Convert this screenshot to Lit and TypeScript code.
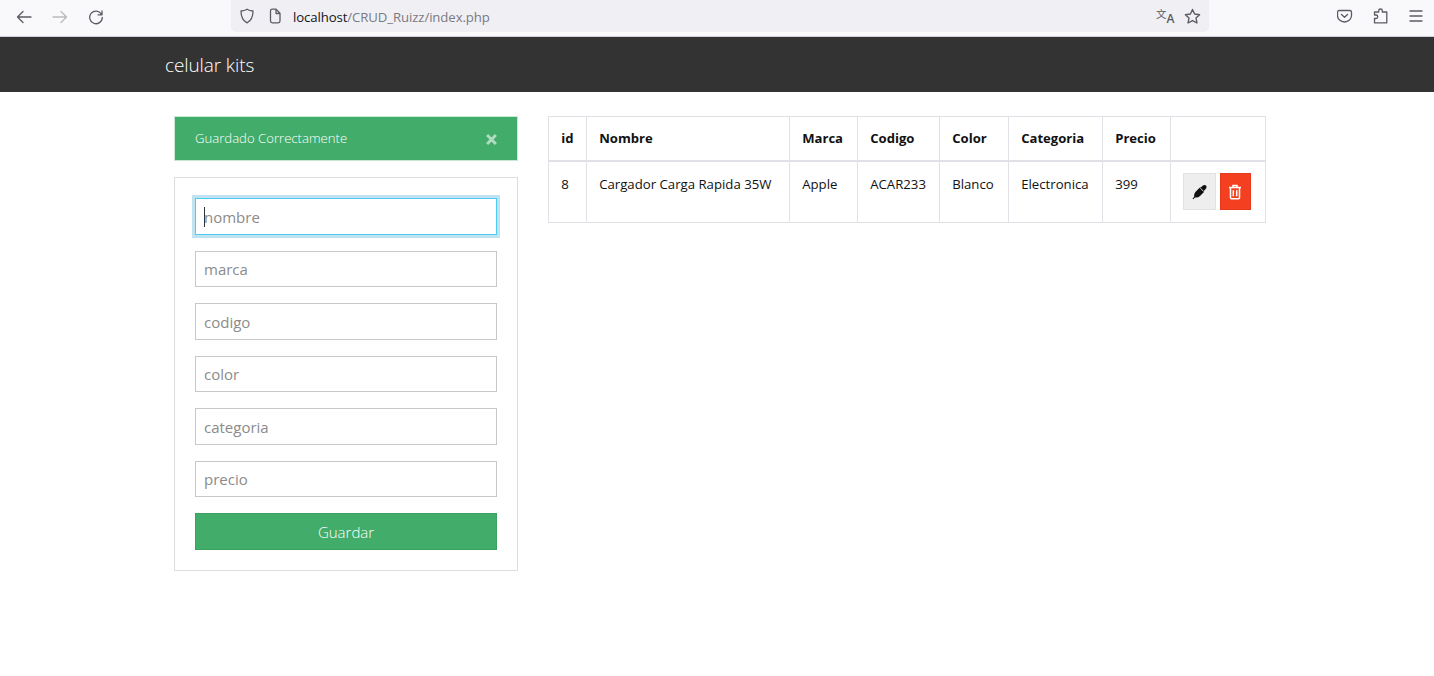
import { LitElement, html, svg, css } from "lit";
import { customElement } from "lit/decorators.js";

const ic = (body: unknown, cls = "") => html`<svg class="ic ${cls}" viewBox="0 0 16 16" fill="none" stroke="currentColor" stroke-width="1.300" stroke-linecap="round" stroke-linejoin="round">${body}</svg>`;

const FIELDS = ["marca", "codigo", "color", "categoria", "precio"];
const HEAD = [["id", "c1"], ["Nombre", "c2"], ["Marca", "c3"], ["Codigo", "c4"], ["Color", "c5"], ["Categoria", "c6"], ["Precio", "c7"], ["", "c8"]];
const ROW = ["8", "Cargador Carga Rapida 35W", "Apple", "ACAR233", "Blanco", "Electronica", "399"];

@customElement("app-root")
export class AppRoot extends LitElement {
  static styles = css`
    :host { display: block; width: 1434px; height: 676px; overflow: hidden; background: #fff; font-family: "Open Sans", sans-serif; color: #111; }
    * { box-sizing: border-box; }
    .toolbar { height: 37px; background: #f9f9fb; border-bottom: 1px solid #cfcfd8; display: flex; align-items: flex-start; }
    .ic { display: block; flex: none; width: 16px; height: 16px; }
    .nav { width: 231px; padding: 9px 0 0 16px; display: flex; gap: 20px; color: #5b5b66; }
    .nav .dim { color: #b9b9c0; }
    .url { width: 978px; height: 32px; background: #f0f0f4; border-radius: 0 0 5px 5px; display: flex; align-items: center; padding: 0 8px; color: #5b5b66; }
    .url .doc { margin-left: 12px; }
    .addr { margin-left: 10px; font-size: 13.200px; letter-spacing: -0.100px; color: #7a7a84; flex: 1; padding-top: 1px; }
    .addr b { font-weight: 400; color: #15141a; }
    .tr { display: block; flex: none; width: 20px; height: 22px; }
    .url .star { margin-left: 8px; width: 17px; height: 17px; }
    .right { flex: 1; display: flex; padding: 8px 0 0 128px; gap: 20px; color: #5b5b66; }
    .brandbar { height: 55px; background: #333; display: flex; align-items: center; padding: 0 0 0 165px; }
    .brand { color: #fff; font-size: 19px; font-weight: 300; letter-spacing: -0.100px; }
    .main { display: flex; gap: 30px; padding: 24px 168px 0 174px; }
    .left { width: 344px; flex: none; }
    .alert { height: 45px; background: #42ac6a; border: 1px solid #c9e8d4; display: flex; justify-content: space-between; align-items: center; padding: 0 20px; color: #fff; font-size: 13.150px; font-weight: 300; margin-bottom: 16px; }
    .alert span { padding-bottom: 2px; }
    .close { color: #fff; opacity: .6; margin: 2px 0 0 0; }
    .panel { border: 1px solid #ddd; padding: 20px; height: 394px; display: flex; flex-direction: column; gap: 16px; }
    .input { height: 36.500px; border: 1px solid #c8c8c8; background: #fff; padding: .5px 8px 0; display: flex; align-items: center; font-size: 15px; color: #8b8b8b; }
    .input.focus { border-color: #4fc9f5; box-shadow: 0 0 0 3px #bfe3f1; }
    .caret { width: 1px; height: 20px; background: #333; margin-right: -1px; }
    .btn { height: 36.500px; background: #42ac6a; border: 1px solid #3ba060; color: #fff; font-size: 15px; font-weight: 300; padding-top: 1px; display: flex; align-items: center; justify-content: center; }
    .right-col { width: 718px; flex: none; }
    table { width: 717px; border-collapse: collapse; table-layout: fixed; font-size: 13.200px; color: #111; }
    th, td { border: 1px solid #e0e0e6; padding: 0 8px 0 12.200px; text-align: left; }
    th { height: 44px; font-size: 13.100px; font-weight: 700; border-bottom-width: 2px; padding-bottom: 1px; }
    td { height: 62px; vertical-align: top; padding-top: 13px; }
    .c1 { width: 38px; } .c2 { width: 203px; } .c3 { width: 68px; } .c4 { width: 82px; }
    .c5 { width: 69px; } .c6 { width: 94px; } .c7 { width: 68px; } .c8 { width: 95px; }
    td.acts { padding: 11px 0 0 12px; }
    .acts div { display: flex; gap: 4px; }
    .b { height: 37px; display: flex; align-items: center; justify-content: center; padding-top: 2px; }
    .edit { width: 33px; background: #eee; border: 1px solid #e2e2e2; color: #111; }
    .del { width: 31px; background: #f44021; border: 1px solid #e63a1c; color: #fff; padding-right: 1px; }
  `;

  render() {
    return html`
      <div class="toolbar">
        <div class="nav">
          ${ic(svg`<path d="M15 8H1.500M7 2.500 1.500 8 7 13.500"/>`)}
          ${ic(svg`<path d="M1 8h13.500M9 2.500 14.500 8 9 13.500"/>`, "dim")}
          ${ic(svg`<path transform="translate(0 -1)" d="M14 2.800v4H10M13.600 6.500A6.300 6.300 0 1 0 14.300 9.500"/>`)}
        </div>
        <div class="url">
          ${ic(svg`<path d="M8 1.200c2 1.300 4 1.700 6 1.800 0 5.500-1.500 9.600-6 11.800C3.500 12.600 2 8.500 2 3c2-.1 4-.5 6-1.800z"/>`)}
          ${ic(svg`<path d="M3.500 3a1.800 1.800 0 0 1 1.800-1.800H9L13 5.200v7.800a1.800 1.800 0 0 1-1.800 1.800H5.300A1.800 1.800 0 0 1 3.500 13zM9 1.500V5.500H12.800"/>`, "doc")}
          <div class="addr"><b>localhost</b>/CRUD_Ruizz/index.php</div>
          <svg class="tr" viewBox="0 0 20 22" fill="currentColor"><text x="0" y="13" font-size="10.500" font-family="'Noto Sans CJK SC', sans-serif">文</text><text x="10.500" y="18" font-size="12" font-weight="600">A</text></svg>
          ${ic(svg`<path d="M8 1.400l2 4.300 4.700.6-3.400 3.200.9 4.600L8 11.800l-4.200 2.300.9-4.600L1.300 6.300 6 5.700z"/>`, "star")}
        </div>
        <div class="right">
          ${ic(svg`<path transform="translate(-.5 0)" d="M2.700 2.500h10.600A1.700 1.700 0 0 1 15 4.200V7.500a7 6.500 0 0 1-14 0V4.200a1.700 1.700 0 0 1 1.700-1.700zM5 6.500 8 9.300l3-2.800"/>`)}
          ${ic(svg`<path d="M1.500 14.800V10.500h1.500a1.500 1.500 0 0 0 0-3.500H1.500V4h4.200V2.800a1.800 1.800 0 0 1 3.600 0V4h4.500v10.800H1.500"/>`)}
          ${ic(svg`<path d="M1 3h12M1 8h12M1 13h12"/>`)}
        </div>
      </div>
      <div class="brandbar"><div class="brand">celular kits</div></div>
      <div class="main">
        <div class="left">
          <div class="alert"><span>Guardado Correctamente</span>
            <svg class="close" width="11" height="11" viewBox="0 0 10 10" stroke="currentColor" stroke-width="2.600"><path d="M1 1l8 8M9 1 1 9"/></svg>
          </div>
          <div class="panel">
            <div class="input focus"><span class="caret"></span>nombre</div>
            ${FIELDS.map((f) => html`<div class="input">${f}</div>`)}
            <div class="btn">Guardar</div>
          </div>
        </div>
        <div class="right-col">
          <table>
            <thead><tr>${HEAD.map(([t, c]) => html`<th class=${c}>${t}</th>`)}</tr></thead>
            <tbody><tr>
              ${ROW.map((t) => html`<td>${t}</td>`)}
              <td class="acts"><div>
                <span class="b edit"><svg width="16" height="16" viewBox="0 0 16 16" fill="currentColor"><path d="M10.300 2c1.300-1.200 2.900-1.300 3.700-.5.800.8.700 2.400-.5 3.700l-1.300 1.300-.2 1.600-4 4C6.500 13.500 4.500 13.700 3 13.500L1.300 15.200.500 14.400 2.200 12.700C2 11.200 2.200 9.200 3.600 7.700l4-4 1.500-.5z"/><path d="M8.400 4.200l3.400 3.400" stroke="#eee" stroke-width=".9" fill="none"/></svg></span>
                <span class="b del"><svg width="14" height="16" viewBox="0 0 14 16" fill="none" stroke="currentColor" stroke-width="1.500"><path d="M1 3.500h12M5 3.300V1.500h4v1.800M2.500 3.500v10.300a1 1 0 0 0 1 1h7a1 1 0 0 0 1-1V3.500M5.300 6.300v6M8.700 6.300v6"/></svg></span>
              </div></td>
            </tr></tbody>
          </table>
        </div>
      </div>
    `;
  }
}
